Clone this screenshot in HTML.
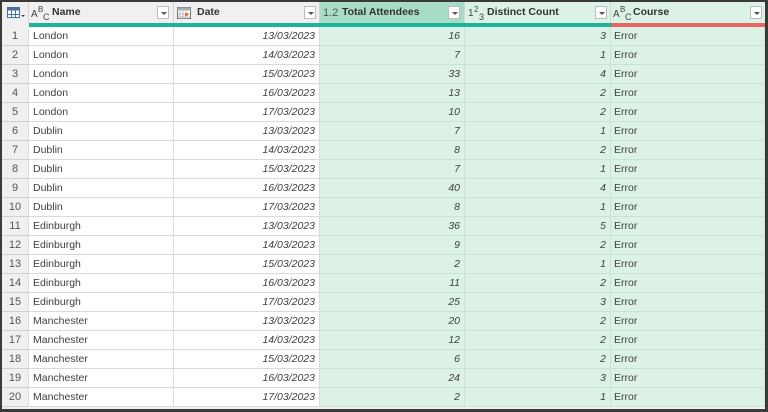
<!DOCTYPE html>
<html><head><meta charset="utf-8"><style>
*{box-sizing:border-box;margin:0;padding:0}
body{width:768px;height:412px;overflow:hidden;background:#fff;font-family:"Liberation Sans",sans-serif;font-size:10.5px;color:#404040;position:relative}
.frame{position:absolute;left:0;top:0;width:768px;height:412px;border:2px solid #3a3a3a;border-right-width:3px;border-bottom-width:3px;background:#f0f0f0}
.c{position:absolute;white-space:nowrap;overflow:hidden}
.hd{top:2px;height:21px;background:#f0f0f0;border-right:1px solid #d4d4d4;font-weight:bold;font-size:10.5px;color:#333;line-height:21px}
.dd{position:absolute;top:4px;width:12px;height:13px;background:#fff;border:1px solid #bdbdbd}
.dd:after{content:"";position:absolute;left:3px;top:5px;border-left:3px solid transparent;border-right:3px solid transparent;border-top:3px solid #555}
.bar{position:absolute;top:23px;height:4px}
.row{position:absolute;left:2px;width:763px;height:19px}
.cell{position:absolute;top:0;height:19px;line-height:19px;border-right:1px solid #dadada;border-bottom:1px solid #dadada;padding:0 4px;overflow:hidden}
.idx{left:0;width:27px;background:#f0f0f0;text-align:center;color:#555;font-size:11px;border-bottom:1px solid #d0d0d0}
.nm{left:27px;width:145px;background:#fff}
.dt{left:172px;width:146px;background:#fff;text-align:right;font-style:italic}
.ta{left:318px;width:145px;background:#dcf2e7;text-align:right;font-style:italic;border-color:#cbe3d7}
.dc{left:463px;width:146px;background:#dcf2e7;text-align:right;font-style:italic;border-color:#cbe3d7}
.co{left:609px;width:154px;background:#dcf2e7;border-color:#cbe3d7;padding-left:3px}
.ic{position:absolute;font-weight:normal;color:#444;line-height:10px}
</style></head><body>
<div class="frame"></div>
<div class="c hd" style="left:2px;width:27px">
<svg style="position:absolute;left:5px;top:5px" width="18" height="12"><rect x="0.5" y="0.5" width="12" height="10" fill="#fff" stroke="#4a6fa5"/><rect x="0.5" y="0.5" width="12" height="3" fill="#4a6fa5"/><line x1="4.5" y1="3" x2="4.5" y2="11" stroke="#4a6fa5"/><line x1="8.5" y1="3" x2="8.5" y2="11" stroke="#4a6fa5"/><line x1="0" y1="7.5" x2="13" y2="7.5" stroke="#4a6fa5"/><path d="M14 8 l2 2 l2 -2z" fill="#444"/></svg></div>
<div class="c hd" style="left:29px;width:145px"><span class="ic" style="left:2px;top:8px;font-size:10px">A</span><span class="ic" style="left:9px;top:3px;font-size:8px">B</span><span class="ic" style="left:14px;top:10px;font-size:9px">C</span><span style="position:absolute;left:23px">Name</span><div class="dd" style="left:128px"></div></div>
<div class="c hd" style="left:174px;width:146px"><svg style="position:absolute;left:3px;top:5px" width="14" height="12"><rect x="0.5" y="0.5" width="13" height="11" fill="#fff" stroke="#777"/><rect x="0.5" y="0.5" width="13" height="3" fill="#aaa"/><path d="M3 4v8M6 4v8M9 4v8M1 7h12M1 10h12" stroke="#bbb"/><rect x="8" y="6" width="3" height="3" fill="#e07050"/></svg><span style="position:absolute;left:23px">Date</span><div class="dd" style="left:130px"></div></div>
<div class="c hd" style="left:320px;width:145px;background:#a9dcc6"><span class="ic" style="left:3px;top:6px;font-size:11px;color:#555">1.2</span><span style="position:absolute;left:22px">Total Attendees</span><div class="dd" style="left:128px"></div></div>
<div class="c hd" style="left:465px;width:146px;background:#dcf2e7"><span class="ic" style="left:3px;top:7px;font-size:10px">1</span><span class="ic" style="left:9px;top:3px;font-size:8px">2</span><span class="ic" style="left:14px;top:10px;font-size:9px">3</span><span style="position:absolute;left:22px">Distinct Count</span><div class="dd" style="left:130px"></div></div>
<div class="c hd" style="left:611px;width:154px;background:#dcf2e7;border-right:none"><span class="ic" style="left:2px;top:8px;font-size:10px">A</span><span class="ic" style="left:9px;top:3px;font-size:8px">B</span><span class="ic" style="left:14px;top:10px;font-size:9px">C</span><span style="position:absolute;left:22px">Course</span><div class="dd" style="left:139px"></div></div>
<div class="bar" style="left:29px;width:582px;background:#1bb39a"></div>
<div class="bar" style="left:611px;width:154px;background:#e8665e"></div>
<div id="rows"></div>
<script>
var d=[["London","13",16,3],["London","14",7,1],["London","15",33,4],["London","16",13,2],["London","17",10,2],["Dublin","13",7,1],["Dublin","14",8,2],["Dublin","15",7,1],["Dublin","16",40,4],["Dublin","17",8,1],["Edinburgh","13",36,5],["Edinburgh","14",9,2],["Edinburgh","15",2,1],["Edinburgh","16",11,2],["Edinburgh","17",25,3],["Manchester","13",20,2],["Manchester","14",12,2],["Manchester","15",6,2],["Manchester","16",24,3],["Manchester","17",2,1]];
var h="";d.forEach(function(r,i){h+='<div class="row" style="top:'+(27+i*19)+'px"><div class="cell idx">'+(i+1)+'</div><div class="cell nm">'+r[0]+'</div><div class="cell dt">'+r[1]+'/03/2023</div><div class="cell ta">'+r[2]+'</div><div class="cell dc">'+r[3]+'</div><div class="cell co">Error</div></div>';});
document.getElementById("rows").innerHTML=h;
</script>
</body></html>
